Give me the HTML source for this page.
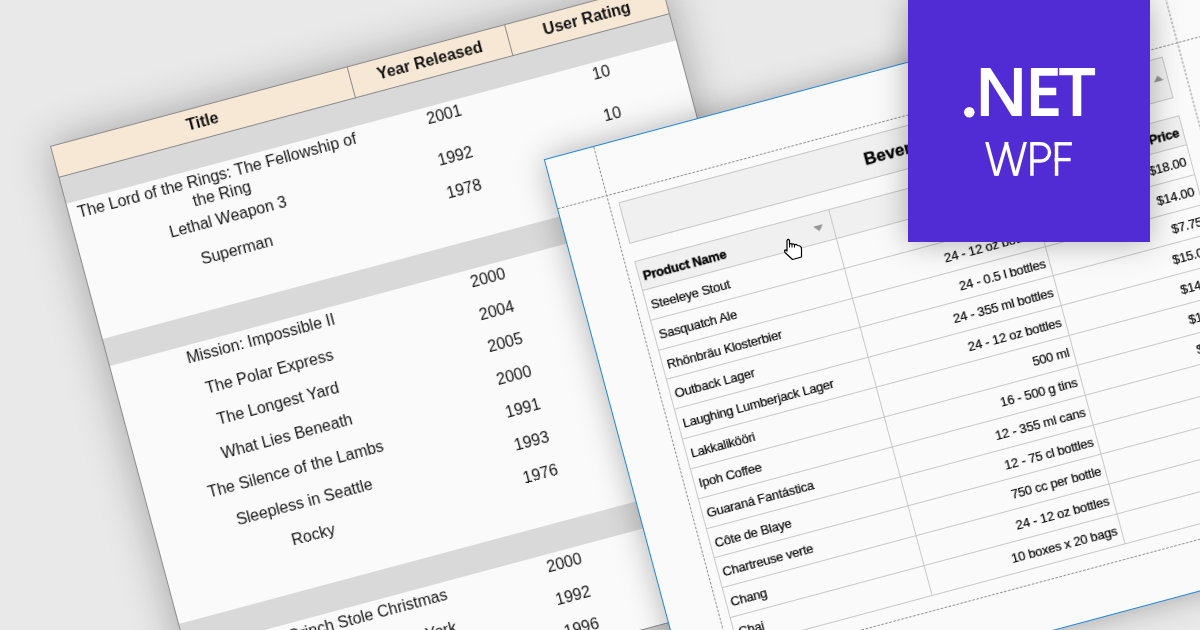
<!DOCTYPE html>
<html><head><meta charset="utf-8"><style>
*{margin:0;padding:0;box-sizing:border-box}
html,body{width:1200px;height:630px;overflow:hidden;background:#e9e9e9;font-family:"Liberation Sans",sans-serif}
.pg{position:absolute;transform-origin:0 0;transform:rotate(-15deg);will-change:transform}
.a{position:absolute}
#lp{background:#fafafa;}
#lp .t{position:absolute;font-size:16px;color:#161616;text-align:center;line-height:17px;white-space:nowrap}
#lp .h{position:absolute;font-size:16px;font-weight:bold;color:#111;text-align:center;line-height:32px;top:0;height:32px}
#lp .band{position:absolute;left:0;right:0;background:#d9d9d9}
#rp{background:#fafafa}
#rp .c{position:absolute;font-size:13px;letter-spacing:-0.2px;color:#000;line-height:31px;-webkit-text-stroke:0.18px #000;white-space:nowrap}
</style></head><body>
<div id="lp" class="pg" style="left:50.3px;top:146.0px;width:632.5px;height:621px;box-shadow:0 0 40px rgba(0,0,0,.3)">
<div class="band" style="top:32.5px;height:27.00px"></div>
<div class="band" style="top:200px;height:28.30px"></div>
<div class="band" style="top:495.4px;height:27.90px"></div>
<div class="a" style="left:0;top:0;width:632.5px;height:32.8px;background:#f7e8d6;border:1px solid #8a8a8a"></div>
<div class="a" style="left:306.8px;top:0;width:1px;height:32px;background:#8a8a8a"></div>
<div class="a" style="left:470px;top:0;width:1px;height:32px;background:#8a8a8a"></div>
<div class="h" style="left:0;width:307.3px">Title</div>
<div class="h" style="left:307.3px;width:163.2px">Year Released</div>
<div class="h" style="left:470.5px;width:162.0px">User Rating</div>
<div class="a" style="left:0;top:0;width:632.5px;height:621px;border:1px solid #8c8c8c"></div>
<div class="t" style="left:0;width:307.3px;top:61.6px;line-height:19.7px">The Lord of the Rings: The Fellowship of<br>the Ring</div>
<div class="t" style="left:307.3px;width:163px;top:62.95px">2001</div>
<div class="t" style="left:470.5px;width:162px;top:62.95px">10</div>
<div class="t" style="left:0;width:307.3px;top:105.65px">Lethal Weapon 3</div>
<div class="t" style="left:307.3px;width:163px;top:105.65px">1992</div>
<div class="t" style="left:470.5px;width:162px;top:105.65px">10</div>
<div class="t" style="left:0;width:307.3px;top:139.55px">Superman</div>
<div class="t" style="left:307.3px;width:163px;top:139.55px">1978</div>
<div class="t" style="left:470.5px;width:162px;top:139.55px">10</div>
<div class="t" style="left:0;width:307.3px;top:231.75px">Mission: Impossible II</div>
<div class="t" style="left:307.3px;width:163px;top:231.75px">2000</div>
<div class="t" style="left:470.5px;width:162px;top:231.75px">9</div>
<div class="t" style="left:0;width:307.3px;top:265.62px">The Polar Express</div>
<div class="t" style="left:307.3px;width:163px;top:265.62px">2004</div>
<div class="t" style="left:470.5px;width:162px;top:265.62px">9</div>
<div class="t" style="left:0;width:307.3px;top:299.49px">The Longest Yard</div>
<div class="t" style="left:307.3px;width:163px;top:299.49px">2005</div>
<div class="t" style="left:470.5px;width:162px;top:299.49px">9</div>
<div class="t" style="left:0;width:307.3px;top:333.36px">What Lies Beneath</div>
<div class="t" style="left:307.3px;width:163px;top:333.36px">2000</div>
<div class="t" style="left:470.5px;width:162px;top:333.36px">9</div>
<div class="t" style="left:0;width:307.3px;top:367.23px">The Silence of the Lambs</div>
<div class="t" style="left:307.3px;width:163px;top:367.23px">1991</div>
<div class="t" style="left:470.5px;width:162px;top:367.23px">9</div>
<div class="t" style="left:0;width:307.3px;top:401.10px">Sleepless in Seattle</div>
<div class="t" style="left:307.3px;width:163px;top:401.10px">1993</div>
<div class="t" style="left:470.5px;width:162px;top:401.10px">9</div>
<div class="t" style="left:0;width:307.3px;top:434.97px">Rocky</div>
<div class="t" style="left:307.3px;width:163px;top:434.97px">1976</div>
<div class="t" style="left:470.5px;width:162px;top:434.97px">9</div>
<div class="t" style="left:0;width:307.3px;top:526.75px">How the Grinch Stole Christmas</div>
<div class="t" style="left:307.3px;width:163px;top:526.75px">2000</div>
<div class="t" style="left:470.5px;width:162px;top:526.75px">8</div>
<div class="t" style="left:0;width:307.3px;top:560.62px">Home Alone 2: Lost in New York</div>
<div class="t" style="left:307.3px;width:163px;top:560.62px">1992</div>
<div class="t" style="left:470.5px;width:162px;top:560.62px">8</div>
<div class="t" style="left:0;width:307.3px;top:594.49px">Independence Day</div>
<div class="t" style="left:307.3px;width:163px;top:594.49px">1996</div>
<div class="t" style="left:470.5px;width:162px;top:594.49px">8</div>
</div>
<div id="rp" class="pg" style="left:545.35px;top:160.15px;width:691.5px;height:586px;box-shadow:0 0 30px rgba(0,0,0,.3);transform:rotate(-15deg) scale(0.9988)">
<div class="a" style="left:-1.2px;top:-1.2px;width:693.9px;height:588.4px;border:1.8px solid #2185d8"></div>
<svg class="a" style="left:0;top:0" width="691.5" height="586"><g stroke="#8a8a8a" stroke-width="1" stroke-dasharray="2.5 1.6" fill="none"><line x1="50.5" y1="0" x2="50.5" y2="586"/><line x1="642" y1="0" x2="642" y2="586"/><line x1="0" y1="50.5" x2="691.5" y2="50.5"/><line x1="0" y1="536.5" x2="691.5" y2="536.5"/></g></svg>
<div class="a" style="left:60px;top:60px;width:563.7px;height:42.5px;background:#f0f0f0;border:1px solid #c6c6c6"></div>
<div class="a" style="left:308.8px;top:60.7px;height:42.5px;line-height:42.5px;font-size:17.3px;font-weight:bold;color:#000;-webkit-text-stroke:0.3px #000">Beverages</div>
<div class="a" style="left:60px;top:121px;width:564.7px;height:31px;background:#f0f0f0;border:1px solid #c8c8c8;border-bottom:0"></div>
<div class="a" style="left:60px;top:151.00px;width:563.7px;height:1px;background:#c8c8c8"></div>
<div class="a" style="left:60px;top:181.83px;width:563.7px;height:1px;background:#c8c8c8"></div>
<div class="a" style="left:60px;top:212.66px;width:563.7px;height:1px;background:#c8c8c8"></div>
<div class="a" style="left:60px;top:243.49px;width:563.7px;height:1px;background:#c8c8c8"></div>
<div class="a" style="left:60px;top:274.32px;width:563.7px;height:1px;background:#c8c8c8"></div>
<div class="a" style="left:60px;top:305.15px;width:563.7px;height:1px;background:#c8c8c8"></div>
<div class="a" style="left:60px;top:335.98px;width:563.7px;height:1px;background:#c8c8c8"></div>
<div class="a" style="left:60px;top:366.81px;width:563.7px;height:1px;background:#c8c8c8"></div>
<div class="a" style="left:60px;top:397.64px;width:563.7px;height:1px;background:#c8c8c8"></div>
<div class="a" style="left:60px;top:428.47px;width:563.7px;height:1px;background:#c8c8c8"></div>
<div class="a" style="left:60px;top:459.30px;width:563.7px;height:1px;background:#c8c8c8"></div>
<div class="a" style="left:60px;top:490.13px;width:563.7px;height:1px;background:#c8c8c8"></div>
<div class="a" style="left:60px;top:520.96px;width:563.7px;height:1px;background:#c8c8c8"></div>
<div class="a" style="left:60px;top:121px;width:1px;height:399.96px;background:#c8c8c8"></div>
<div class="a" style="left:261px;top:121px;width:1px;height:399.96px;background:#c8c8c8"></div>
<div class="a" style="left:461px;top:121px;width:1px;height:399.96px;background:#c8c8c8"></div>
<div class="a" style="left:623.7px;top:121px;width:1px;height:399.96px;background:#c8c8c8"></div>
<div class="c" style="left:65px;top:122.5px;font-weight:bold;line-height:30px;-webkit-text-stroke:0.35px #000">Product Name</div>
<div class="c" style="left:261px;width:196px;top:122.5px;font-weight:bold;line-height:30px;-webkit-text-stroke:0.35px #000;text-align:right">Quantity Per Unit</div>
<div class="c" style="left:461px;width:159px;top:122.5px;font-weight:bold;line-height:30px;-webkit-text-stroke:0.35px #000;text-align:right">Unit Price</div>
<div class="a" style="left:242.3px;top:133.6px;width:0;height:0;border-left:5.3px solid transparent;border-right:5.3px solid transparent;border-top:6px solid #969696"></div>
<div class="a" style="left:608.5px;top:77.4px;width:0;height:0;border-left:5.3px solid transparent;border-right:5.3px solid transparent;border-bottom:6px solid #969696"></div>
<div class="c" style="left:65px;top:152.00px">Steeleye Stout</div>
<div class="c" style="left:261px;width:196px;text-align:right;top:152.00px">24 - 12 oz bottles</div>
<div class="c" style="left:461px;width:158.5px;text-align:right;top:152.00px">$18.00</div>
<div class="c" style="left:65px;top:182.83px">Sasquatch Ale</div>
<div class="c" style="left:261px;width:196px;text-align:right;top:182.83px">24 - 12 oz bottles</div>
<div class="c" style="left:461px;width:158.5px;text-align:right;top:182.83px">$14.00</div>
<div class="c" style="left:65px;top:213.66px">Rhönbräu Klosterbier</div>
<div class="c" style="left:261px;width:196px;text-align:right;top:213.66px">24 - 0.5 l bottles</div>
<div class="c" style="left:461px;width:158.5px;text-align:right;top:213.66px">$7.75</div>
<div class="c" style="left:65px;top:244.49px">Outback Lager</div>
<div class="c" style="left:261px;width:196px;text-align:right;top:244.49px">24 - 355 ml bottles</div>
<div class="c" style="left:461px;width:158.5px;text-align:right;top:244.49px">$15.00</div>
<div class="c" style="left:65px;top:275.32px">Laughing Lumberjack Lager</div>
<div class="c" style="left:261px;width:196px;text-align:right;top:275.32px">24 - 12 oz bottles</div>
<div class="c" style="left:461px;width:158.5px;text-align:right;top:275.32px">$14.00</div>
<div class="c" style="left:65px;top:306.15px">Lakkalikööri</div>
<div class="c" style="left:261px;width:196px;text-align:right;top:306.15px">500 ml</div>
<div class="c" style="left:461px;width:158.5px;text-align:right;top:306.15px">$18.00</div>
<div class="c" style="left:65px;top:336.98px">Ipoh Coffee</div>
<div class="c" style="left:261px;width:196px;text-align:right;top:336.98px">16 - 500 g tins</div>
<div class="c" style="left:461px;width:158.5px;text-align:right;top:336.98px">$46.00</div>
<div class="c" style="left:65px;top:367.81px">Guaraná Fantástica</div>
<div class="c" style="left:261px;width:196px;text-align:right;top:367.81px">12 - 355 ml cans</div>
<div class="c" style="left:461px;width:158.5px;text-align:right;top:367.81px">$4.50</div>
<div class="c" style="left:65px;top:398.64px">Côte de Blaye</div>
<div class="c" style="left:261px;width:196px;text-align:right;top:398.64px">12 - 75 cl bottles</div>
<div class="c" style="left:461px;width:158.5px;text-align:right;top:398.64px">$263.50</div>
<div class="c" style="left:65px;top:429.47px">Chartreuse verte</div>
<div class="c" style="left:261px;width:196px;text-align:right;top:429.47px">750 cc per bottle</div>
<div class="c" style="left:461px;width:158.5px;text-align:right;top:429.47px">$18.00</div>
<div class="c" style="left:65px;top:460.30px">Chang</div>
<div class="c" style="left:261px;width:196px;text-align:right;top:460.30px">24 - 12 oz bottles</div>
<div class="c" style="left:461px;width:158.5px;text-align:right;top:460.30px">$19.00</div>
<div class="c" style="left:65px;top:491.13px">Chai</div>
<div class="c" style="left:261px;width:196px;text-align:right;top:491.13px">10 boxes x 20 bags</div>
<div class="c" style="left:461px;width:158.5px;text-align:right;top:491.13px">$18.00</div>
</div>
<svg class="a" style="left:780px;top:232px" width="28" height="32" viewBox="0 0 28 32"><path d="M7,19 L7,8.5 Q8.2,6.3 9.5,8.5 L9.5,12.5 Q10.8,10.8 12,12.5 Q13.2,11 14.5,13 Q16,11.5 17.5,13.5 Q21.5,13.5 21.5,17 L21.5,25 L12.5,27.5 L5,20.5 Q3.8,18 6,17.8 L7,19 Z" fill="#fff" stroke="#000" stroke-width="1.2" stroke-linejoin="round"/><path d="M9.5,12.5 V15.5 M12,12.5 V15.5 M14.5,13 V15.5" stroke="#000" stroke-width="1"/></svg>
<div class="a" style="left:908px;top:0;width:242px;height:241.6px;background:#512bd4;box-shadow:0 0 30px rgba(0,0,0,.3)"></div><svg class="a" style="left:0;top:0" width="1200" height="630" viewBox="0 0 1200 630"><g fill="#fff"><circle cx="969.3" cy="112.3" r="5.3"/><polygon points="980.8,116 980.8,67.9 990.3,67.9 1013.9,104.5 1013.9,67.9 1021.8,67.9 1021.8,116 1011.9,116 988.9,79 988.9,116"/><polygon points="1030.9,67.9 1057.8,67.9 1057.8,75.75 1039.1,75.75 1039.1,87.8 1056.25,87.8 1056.25,95.35 1039.1,95.35 1039.1,108.2 1058.6,108.2 1058.6,116 1030.9,116"/><polygon points="1059.2,67.9 1095.1,67.9 1095.1,75.2 1081.3,75.2 1081.3,116 1072.7,116 1072.7,75.2 1059.2,75.2"/><polygon points="985.1,142.1 988.6,142.1 997.8,175.8 994.2,175.8"/><polygon points="995.1,175.8 998.7,175.8 1008.6,142.1 1005.1,142.1"/><polygon points="1004.3,142.1 1007.8,142.1 1017,175.8 1013.4,175.8"/><polygon points="1014.3,175.8 1017.9,175.8 1027,142.1 1023.5,142.1"/><rect x="1030.2" y="142.1" width="3.5" height="33.7"/><rect x="1054.8" y="142.1" width="3.5" height="33.7"/><rect x="1054.6" y="142.1" width="17.3" height="3.4"/><rect x="1054.6" y="157.9" width="16" height="3.4"/></g><path d="M1031.9,143.8 H1040.9 A8.6,8.6 0 0 1 1040.9,161 H1031.9" fill="none" stroke="#fff" stroke-width="3.4"/></svg>
</body></html>
